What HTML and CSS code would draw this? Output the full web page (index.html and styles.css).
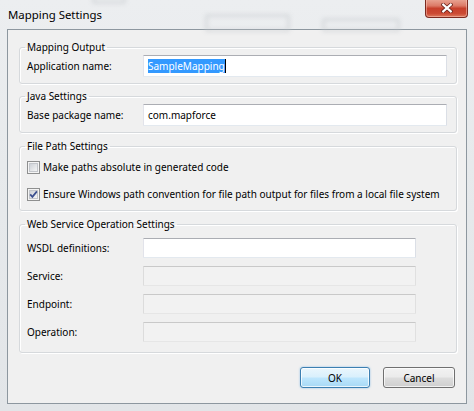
FILE: index.html
```html
<!DOCTYPE html>
<html lang="en">
<head>
<meta charset="utf-8">
<title>Mapping Settings</title>
<link rel="stylesheet" href="styles.css">
</head>
<body>
<div class="window">
  <div class="glass">
    <span class="smudge s1"></span>
    <span class="smudge s2"></span>
    <span class="smudge s3"></span>
  </div>
  <div class="titlebar">
    <span class="title">Mapping Settings</span>
    <button class="close" aria-label="Close">
      <svg width="12" height="10" viewBox="0 0 12 10">
        <path d="M2.2 1.6 L9.8 8.4 M9.8 1.6 L2.2 8.4" stroke="#6b2219" stroke-width="3.8" stroke-linecap="square"/>
        <path d="M2.2 1.6 L9.8 8.4 M9.8 1.6 L2.2 8.4" stroke="#ffffff" stroke-width="2.1" stroke-linecap="square"/>
      </svg>
    </button>
  </div>

  <div class="client">
    <fieldset class="group g-output">
      <legend>Mapping Output</legend>
      <div class="row">
        <span class="label">Application name:</span>
        <div class="field"><span class="selected">SampleMapping</span><span class="caret"></span></div>
      </div>
    </fieldset>

    <fieldset class="group g-java">
      <legend>Java Settings</legend>
      <div class="row">
        <span class="label">Base package name:</span>
        <div class="field">com.mapforce</div>
      </div>
    </fieldset>

    <fieldset class="group g-paths">
      <legend>File Path Settings</legend>
      <label class="check">
        <svg class="box" width="13" height="13" viewBox="0 0 13 13">
          <defs>
            <linearGradient id="cbA" x1="0" y1="0" x2="1" y2="1">
              <stop offset="0" stop-color="#cbcfd5"/>
              <stop offset="1" stop-color="#f7f7f7"/>
            </linearGradient>
          </defs>
          <rect x="0.5" y="0.5" width="12" height="12" fill="#f4f4f4" stroke="#8e8f8f"/>
          <rect x="2.5" y="2.5" width="8" height="8" fill="url(#cbA)" stroke="#c3c6cb"/>
        </svg>
        <span>Make paths absolute in generated code</span>
      </label>
      <label class="check">
        <svg class="box" width="13" height="13" viewBox="0 0 13 13">
          <defs>
            <linearGradient id="cbB" x1="0" y1="0" x2="1" y2="1">
              <stop offset="0" stop-color="#cbcfd5"/>
              <stop offset="1" stop-color="#f7f7f7"/>
            </linearGradient>
          </defs>
          <rect x="0.5" y="0.5" width="12" height="12" fill="#f4f4f4" stroke="#8e8f8f"/>
          <rect x="2.5" y="2.5" width="8" height="8" fill="url(#cbB)" stroke="#c3c6cb"/>
          <path d="M3.2 6.4 L5.4 8.9 L9.9 3.4" fill="none" stroke="#3b4f8f" stroke-width="1.7"/>
        </svg>
        <span>Ensure Windows path convention for file path output for files from a local file system</span>
      </label>
    </fieldset>

    <fieldset class="group g-web">
      <legend>Web Service Operation Settings</legend>
      <div class="row tall">
        <span class="label">WSDL definitions:</span>
        <div class="field short"></div>
      </div>
      <div class="row tall">
        <span class="label">Service:</span>
        <div class="field short disabled"></div>
      </div>
      <div class="row tall">
        <span class="label">Endpoint:</span>
        <div class="field short disabled"></div>
      </div>
      <div class="row tall">
        <span class="label">Operation:</span>
        <div class="field short disabled"></div>
      </div>
    </fieldset>

    <div class="buttons">
      <button class="btn default">OK</button>
      <button class="btn cancel">Cancel</button>
    </div>
  </div>
</div>
</body>
</html>
```

FILE: styles.css
```css
* {
  box-sizing: border-box;
}

html,
body {
  margin: 0;
  padding: 0;
}

body {
  width: 474px;
  height: 411px;
  overflow: hidden;
  font-family: "Noto Sans", "Open Sans", sans-serif;
  font-size: 10px;
  color: #000;
}

/* window frame: pale glass with the desktop showing through */
.window {
  position: relative;
  width: 474px;
  height: 411px;
  padding: 0 7px 7px 7px;
  display: flex;
  flex-direction: column;
  overflow: hidden;
  background: linear-gradient(180deg, #eceef0 0%, #e7eaec 40%, #e2e5e8 100%);
}

.glass {
  position: absolute;
  inset: 0;
  pointer-events: none;
}

.smudge {
  position: absolute;
  border: 3px solid #c4c8cc;
  filter: blur(2px);
  opacity: 0.5;
  border-radius: 2px;
}

.s1 {
  left: 205px;
  top: 14px;
  width: 85px;
  height: 18px;
}

.s2 {
  left: 322px;
  top: 18px;
  width: 78px;
  height: 14px;
}

.s3 {
  left: 92px;
  top: -6px;
  width: 34px;
  height: 10px;
}

.titlebar {
  position: relative;
  height: 29px;
  display: flex;
  justify-content: space-between;
  align-items: flex-start;
  flex: none;
}

.title {
  margin: 8px 0 0 1px;
  font-size: 11.4px;
  line-height: 14px;
  color: #000;
}

.close {
  width: 43px;
  height: 19px;
  margin: -1px -1px 0 0;
  padding: 0;
  border: 1px solid #7c2a20;
  border-top: none;
  border-radius: 0 0 4px 4px;
  display: flex;
  align-items: center;
  justify-content: center;
  background: linear-gradient(180deg, #eaa897 0%, #dc7a67 38%, #c7402c 52%, #cb4a34 80%, #dd7a5e 100%);
  box-shadow: inset 0 0 0 1px rgba(255, 210, 200, 0.45);
}

/* dialog body */
.client {
  flex: 1;
  background: #f0f0f0;
  border: 1px solid #8d979f;
  padding: 0 9px 0 11px;
  display: flex;
  flex-direction: column;
}

.group {
  margin: 5px 0 0 0;
  padding: 1px 9px 6px 7px;
  min-width: 0;
  border: 1px solid #d6d9dc;
  border-radius: 3px;
  box-shadow: inset 1px 1px 0 #ffffff, 1px 1px 0 #ffffff;
}

.group legend {
  margin-left: -2px;
  padding: 0 2px;
  line-height: 14px;
  font-size: 10px;
}

.g-output {
  margin-top: 10px;
}

.g-paths {
  margin-top: 6px;
  padding-top: 3px;
  padding-bottom: 5px;
}

.g-web {
  margin-top: 6px;
  padding-top: 3px;
  padding-bottom: 6px;
}

.row {
  display: flex;
  align-items: center;
  height: 22px;
}

.row.tall {
  height: 28px;
}

.label {
  width: 116px;
  flex: none;
}

.field {
  flex: 1;
  height: 22px;
  padding-left: 4px;
  display: flex;
  align-items: center;
  background: #ffffff;
  border: 1px solid;
  border-color: #abadb3 #dbdfe6 #e3e9ef #e2e3ea;
  border-radius: 1px;
  white-space: nowrap;
}

.field.short {
  flex: none;
  width: 273px;
  height: 20px;
}

.field.disabled {
  background: #f2f2f2;
  border-color: #c9c9c9 #e0e0e0 #e6e6e6 #dcdcdc;
}

.selected {
  background: #3399ff;
  color: #ffffff;
  line-height: 14px;
}

.caret {
  width: 1px;
  height: 14px;
  background: #000;
}

.check {
  display: flex;
  align-items: center;
  gap: 3px;
  height: 22px;
}

.check + .check {
  margin-top: 5px;
}

.box {
  flex: none;
  display: block;
}

.buttons {
  display: flex;
  justify-content: flex-end;
  gap: 13px;
  margin: 14px 2px 0 0;
}

.btn {
  width: 70px;
  height: 21px;
  padding: 0;
  font-family: inherit;
  font-size: 10px;
  color: #000;
  border: 1px solid #707070;
  border-radius: 3px;
  background: linear-gradient(180deg, #f2f2f2 0%, #ebebeb 48%, #dddddd 52%, #cfcfcf 100%);
  box-shadow: inset 0 0 0 1px rgba(255, 255, 255, 0.7);
}

.btn.cancel {
  width: 72px;
}

.btn.default {
  border-color: #3c7fb1;
  background: linear-gradient(180deg, #eaf6fd 0%, #d9f0fc 48%, #bee6fd 52%, #a7d9f5 100%);
  box-shadow: inset 0 0 0 1px rgba(255, 255, 255, 0.75), 0 0 2px rgba(60, 150, 220, 0.6);
}
```
